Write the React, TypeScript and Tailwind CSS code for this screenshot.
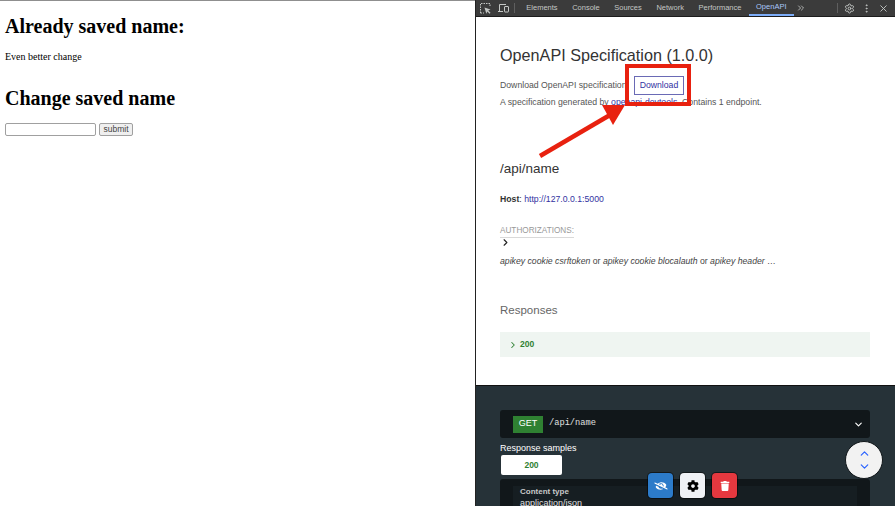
import { ChevronDown, ChevronRight, ChevronUp, ChevronsRight, EllipsisVertical, Settings, X } from "lucide-react";
import { FaCog, FaEyeSlash, FaTrash } from "react-icons/fa";

const tabs = ["Elements", "Console", "Sources", "Network", "Performance"];

function Toolbar() {
  return (
    <div className="flex h-[17px] shrink-0 items-center border-b border-[#1c1c1c] bg-[#3b3b3b] font-['Liberation_Sans',sans-serif] text-[7.5px] text-[#c4c7c5]">
      <div className="flex w-[38px] shrink-0 items-center gap-[7px] pl-[4px]">
        <svg width="11" height="11" viewBox="0 0 11 11" fill="none" stroke="currentColor">
          <path d="M.5 10V.5H10V4M.5 10H4" strokeDasharray="1.5 1" />
          <path d="M4.5 4.5l6 2-2.3 1 2.3 2.3-.9.9-2.3-2.3-1 2.3z" fill="currentColor" stroke="none" />
        </svg>
        <svg width="11" height="10" viewBox="0 0 11 10" fill="none" stroke="currentColor">
          <path d="M1.5 8V1.5h6.5M0 8.5h5" />
          <rect x="6.5" y="3.5" width="4" height="5.5" rx="0.5" />
        </svg>
      </div>
      <div className="h-[10px] w-px bg-[#5f5f5f]" />
      <div className="ml-[4px] flex items-center">
        {tabs.map((tab) => (
          <span key={tab} className="px-[7.3px]">
            {tab}
          </span>
        ))}
        <span className="flex h-[16px] items-center border-b-2 border-[#7cacf8] px-[7.3px] text-[#a8c7fa]">OpenAPI</span>
      </div>
      <ChevronsRight size={10} className="ml-[2px]" />
      <div className="ml-auto flex items-center gap-[6px] pr-[6px]">
        <div className="h-[10px] w-px bg-[#5f5f5f]" />
        <Settings size={11} />
        <EllipsisVertical size={11} />
        <X size={11} />
      </div>
    </div>
  );
}

function ApiInfo() {
  return (
    <div className="h-[369px] shrink-0 border-b border-[#111] bg-white pl-[24px] pr-[25px] font-['Liberation_Sans',sans-serif] text-[#333]">
      <h1 className="pt-[28px] text-[16.2px] leading-[20px] text-[#333]">OpenAPI Specification (1.0.0)</h1>
      <div className="mt-[11px] flex h-[19px] items-center text-[8.7px] text-[#555]">
        <span>Download OpenAPI specification:</span>
        <span className="ml-[5px] flex h-[19px] w-[50px] items-center justify-center border border-[#6a6ab5] text-[#32329f]">
          Download
        </span>
      </div>
      <p className="mt-[1px] text-[8.7px] leading-[12px] text-[#555]">
        A specification generated by <span className="text-[#32329f]">openapi-devtools</span>. Contains 1 endpoint.
      </p>
      <h2 className="mt-[52px] text-[13.5px] leading-[18px] text-[#333]">/api/name</h2>
      <p className="mt-[15px] text-[8.7px] leading-[12px] text-[#333]">
        <b>Host</b>: <span className="text-[#32329f]">http://127.0.0.1:5000</span>
      </p>
      <div className="mt-[20px] w-fit border-b border-[#d9d9d9] text-[8.2px] leading-[12px] text-[#999]">AUTHORIZATIONS:</div>
      <ChevronRight size={11} strokeWidth={2.5} className="-mt-[1px] text-[#222]" />
      <p className="mt-[7px] text-[8.7px] leading-[12px] text-[#444]">
        <i>apikey cookie csrftoken</i> or <i>apikey cookie blocalauth</i> or <i>apikey header</i> …
      </p>
      <h3 className="mt-[35px] text-[11.5px] leading-[16px] text-[#666]">Responses</h3>
      <div className="mt-[14px] flex h-[25px] items-center gap-[2px] bg-[#eff5f1] pl-[8px] text-[8.5px] font-bold text-[#2f8132]">
        <ChevronRight size={10} strokeWidth={2.5} />
        200
      </div>
    </div>
  );
}

function ApiSamples() {
  return (
    <div className="min-h-0 flex-1 overflow-hidden bg-[#263238] pl-[24px] pr-[25px] pt-[24px] font-['Liberation_Sans',sans-serif]">
      <div className="flex h-[28px] items-center rounded-[3px] bg-[#11171a] pl-[13px] pr-[6px]">
        <span className="flex h-[17px] w-[30px] items-center justify-center bg-[#2f8132] text-[9px] text-white">GET</span>
        <span className="ml-[6px] font-['Liberation_Mono',monospace] text-[8.7px] text-[#e0e0e0]">/api/name</span>
        <ChevronDown size={11} strokeWidth={2.5} className="ml-auto text-white" />
      </div>
      <p className="mt-[4px] text-[9px] leading-[13px] text-white">Response samples</p>
      <div className="ml-px flex h-[20px] w-[61px] items-center justify-center rounded-[2px] bg-white text-[8.5px] font-bold text-[#2f8132]">
        200
      </div>
      <div className="mt-[4px] h-[40px] rounded-t-[3px] bg-[#11171a] px-[13px] pt-[7px] text-[8px]">
        <div className="h-full bg-[#161e22]">
          <p className="pl-[7px] font-bold leading-[11px] text-[#c8c8c8]">Content type</p>
          <p className="pl-[7px] text-[9px] leading-[13px] text-[#e0e0e0]">application/json</p>
        </div>
      </div>
    </div>
  );
}

export default function App() {
  return (
    <div className="relative flex h-[506px] w-[895px] overflow-hidden bg-white">
      <main className="h-full w-[475px] shrink-0 border-t border-[#8f8f8f] pl-[5px] font-['Liberation_Serif',serif] text-black">
        <h1 className="pt-[13px] text-[20px] font-bold leading-[24px]">Already saved name:</h1>
        <p className="mt-[13px] text-[10px] leading-[12px]">Even better change</p>
        <h1 className="mt-[23px] text-[20px] font-bold leading-[24px]">Change saved name</h1>
        <form className="mt-[13px] flex items-center gap-[3px]">
          <input className="h-[13px] w-[91px] rounded-[2px] border border-[#a0a0a0] bg-white" />
          <button type="button" className="h-[13px] w-[34px] rounded-[2px] border border-[#a0a0a0] bg-[#efefef] font-['Liberation_Sans',sans-serif] text-[8.5px] leading-none text-[#444]">
            submit
          </button>
        </form>
      </main>
      <section className="flex h-full min-w-0 flex-1 flex-col border-l border-[#222]">
        <Toolbar />
        <ApiInfo />
        <ApiSamples />
      </section>

      {/* annotation: box and arrow */}
      <div className="absolute left-[625px] top-[64px] h-[42px] w-[66px] border-[4px] border-[#e8210f]" />
      <svg className="absolute left-[535px] top-[100px]" width="95" height="60" viewBox="0 0 95 60">
        <path d="M5 56L75 15" stroke="#e8210f" strokeWidth="4.5" />
        <path d="M67 5H90L78 25Z" fill="#e8210f" />
      </svg>

      {/* floating buttons */}
      <div className="absolute left-[648px] top-[473px] flex gap-[7px]">
        <span className="flex h-[25px] w-[25px] items-center justify-center rounded-[4px] bg-[#2c7bc9] text-white ring-1 ring-black/50">
          <FaEyeSlash size={12} className="-rotate-12" />
        </span>
        <span className="flex h-[25px] w-[25px] items-center justify-center rounded-[4px] bg-[#eff1f5] text-black ring-1 ring-black/50">
          <FaCog size={12} />
        </span>
        <span className="flex h-[25px] w-[25px] items-center justify-center rounded-[4px] bg-[#e5383f] text-white ring-1 ring-black/50">
          <FaTrash size={10} />
        </span>
      </div>
      <div className="absolute left-[845px] top-[441px] flex h-[38px] w-[38px] flex-col items-center justify-center rounded-full border border-[#11171a] bg-[#f2f2f2] text-[#2962ff]">
        <ChevronUp size={13} strokeWidth={2.2} />
        <ChevronDown size={13} strokeWidth={2.2} />
      </div>
    </div>
  );
}
